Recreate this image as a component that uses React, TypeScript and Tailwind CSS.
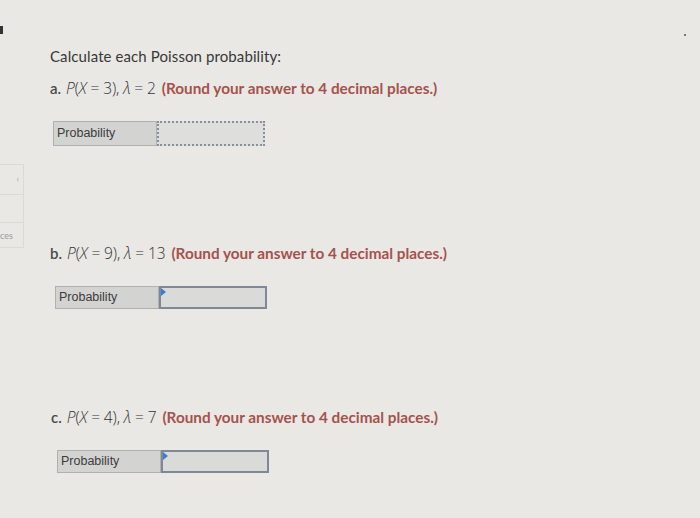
import React from "react";

function Question({ letter, x, lam, ml, h, focused }: { letter: string; x: string; lam: string; ml: string; h: string; focused?: boolean }) {
  return (
    <div className="flex flex-col">
      <div className="flex items-baseline text-[#3a3a3a] whitespace-nowrap leading-[20px]">
        <span className="font-['Lato',sans-serif] font-semibold text-[15px] text-[#4a4a4a] mr-[5px]">{letter}.</span>
        <span className="font-['Open_Sans',sans-serif] font-light text-[15.5px] text-[#333] tracking-[-0.1px]">
          <i>P</i>(<i>X</i> = {x}), <i>λ</i> = {lam}
        </span>
        <span className="font-['Lato',sans-serif] font-bold text-[15.3px] text-[#a6524c] ml-[6px]">(Round your answer to 4 decimal places.)</span>
      </div>
      <div className={`flex mt-[23px] w-[212px] ${h} ${ml}`}>
        <div className="w-[104px] h-full bg-[#d3d3d2] border border-[#b0b0b0] flex items-center pl-[3px] font-['Liberation_Sans',sans-serif] text-[12.5px] text-[#3c3c3c]">
          Probability
        </div>
        {focused ? (
          <div className="flex-1 h-full bg-[#dededd] border-2 border-dotted border-[#8590a0]" />
        ) : (
          <div className="relative flex-1 h-full bg-[#dadad9] border-2 border-[#7e8896]">
            <div className="absolute left-0 top-0 w-0 h-0 border-t-[4px] border-b-[4px] border-l-[5px] border-t-transparent border-b-transparent border-l-[#3a7bd5]" />
          </div>
        )}
      </div>
    </div>
  );
}

export default function App() {
  return (
    <div className="relative w-[700px] h-[518px] bg-[#e9e8e4] flex overflow-hidden font-['Lato',sans-serif]">
      <div className="w-[24px] flex flex-col shrink-0">
        <div className="h-[8px] mt-[26px] w-[3px] bg-[#333]" />
        <div className="mt-[130px] border-t border-r border-[#dcdad4] h-[30px] text-right text-[9px] text-[#aaa] pr-[4px] pt-[9px] leading-none">‹</div>
        <div className="border-t border-r border-[#dcdad4] h-[28px]" />
        <div className="border-t border-b border-r border-[#dcdad4] h-[26px] text-[9px] text-[#999] pt-[8px] leading-none">ces</div>
      </div>
      <div className="flex flex-col pl-[26px] pt-[46px]">
        <div className="text-[15px] text-[#383838] font-['Lato',sans-serif] leading-[20px] tracking-[0.1px]">Calculate each Poisson probability:</div>
        <div className="mt-[12px]">
          <Question letter="a" x="3" lam="2" ml="ml-[3px]" h="h-[25px]" focused />
        </div>
        <div className="mt-[97px]">
          <Question letter="b" x="9" lam="13" ml="ml-[5px]" h="h-[23px]" />
        </div>
        <div className="mt-[98px] ml-[1px]">
          <Question letter="c" x="4" lam="7" ml="ml-[6px]" h="h-[23px]" />
        </div>
      </div>
      <div className="absolute left-[684px] top-[34px] w-[2px] h-[2px] bg-[#777]" />
    </div>
  );
}
